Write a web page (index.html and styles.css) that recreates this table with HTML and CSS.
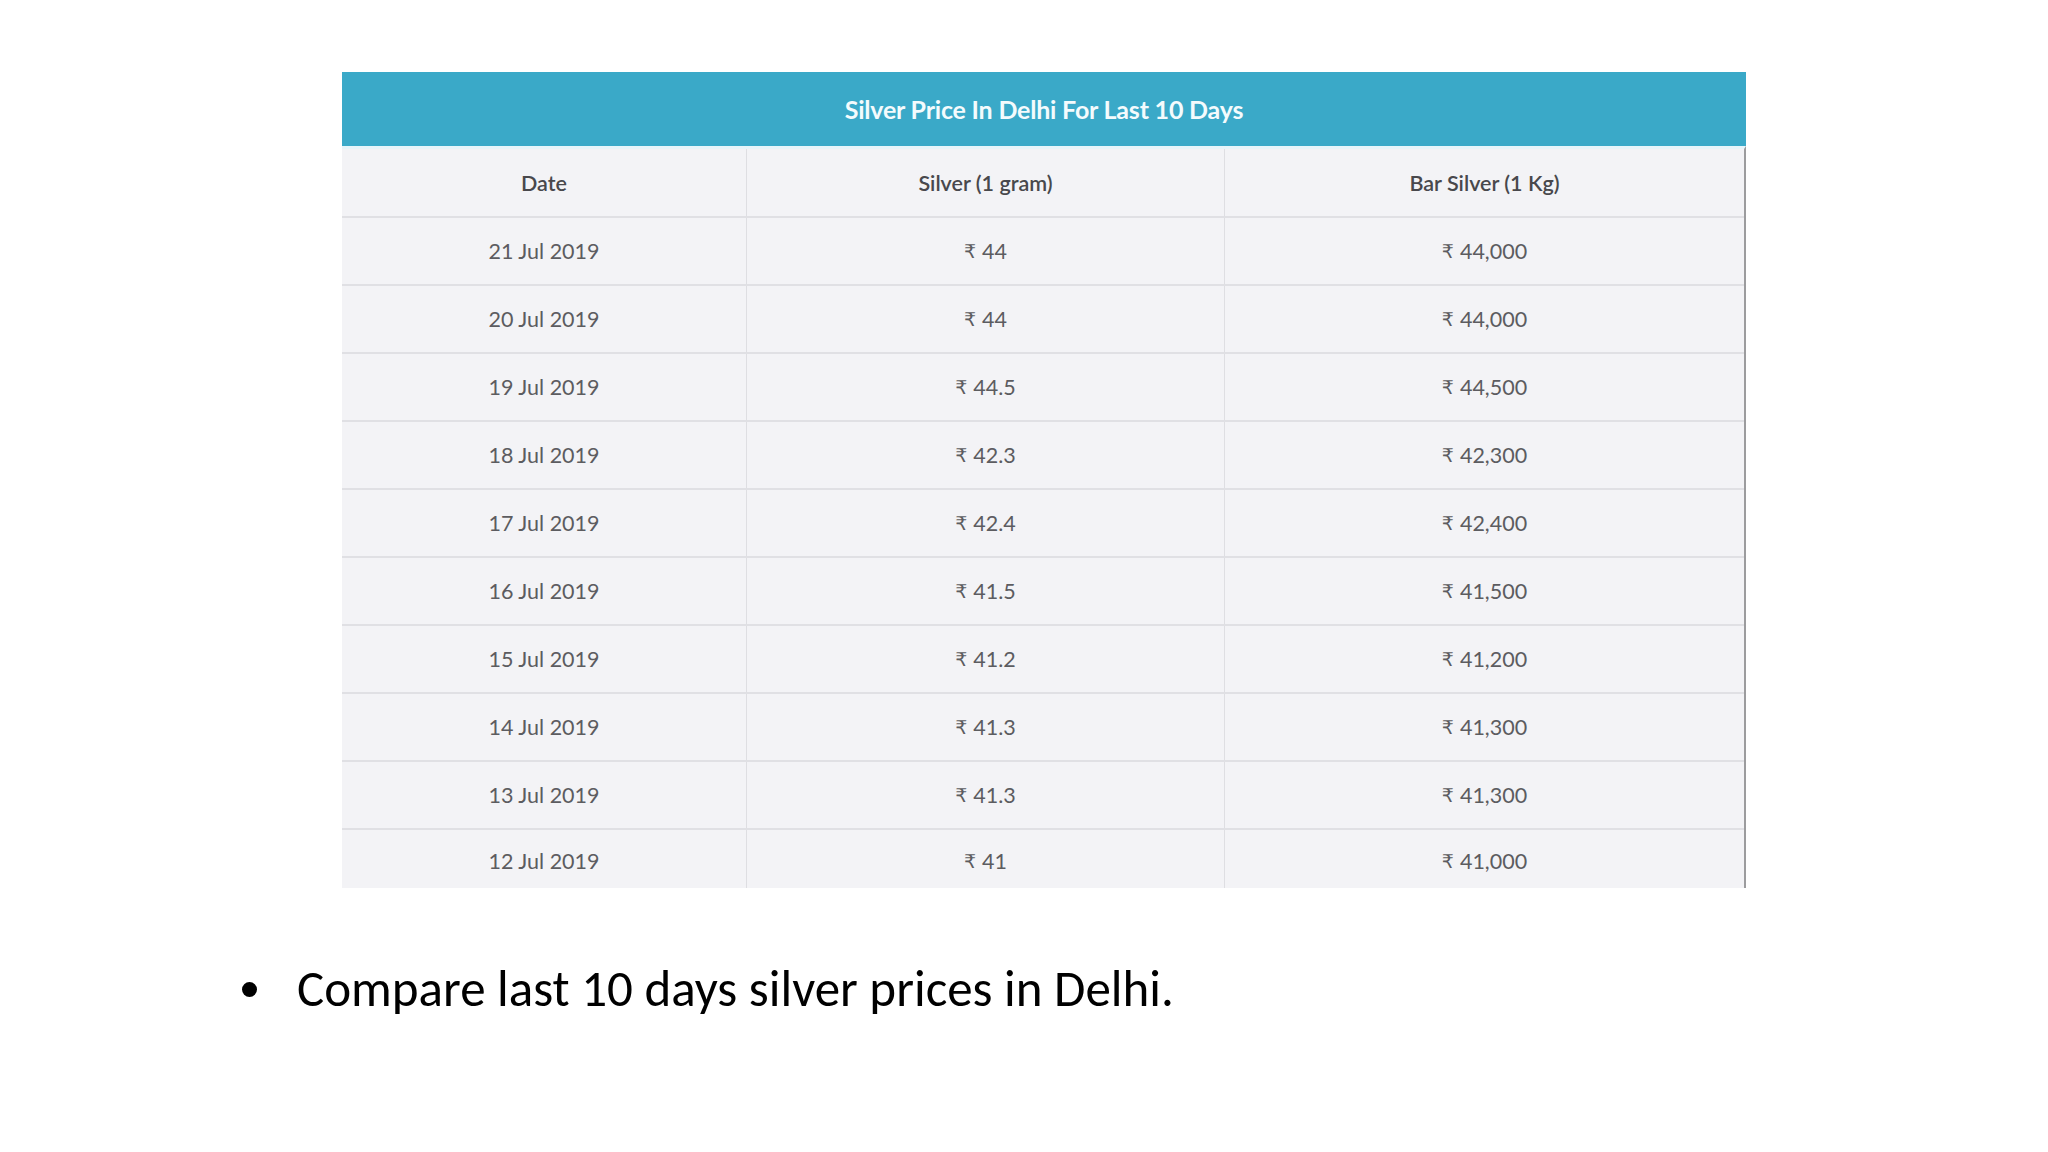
FILE: index.html
```html
<!DOCTYPE html>
<html>
<head>
<meta charset="utf-8">
<link rel="stylesheet" href="styles.css">
</head>
<body>
<div class="slide">
  <div class="table-wrap">
    <div class="title">Silver Price In Delhi For Last 10 Days</div>
    <div class="grid">
      <div class="cell head">Date</div><div class="cell head">Silver (1 gram)</div><div class="cell head">Bar Silver (1 Kg)</div>
      <div class="cell">21 Jul 2019</div><div class="cell"><span class="rs">₹</span>44</div><div class="cell"><span class="rs">₹</span>44,000</div>
      <div class="cell">20 Jul 2019</div><div class="cell"><span class="rs">₹</span>44</div><div class="cell"><span class="rs">₹</span>44,000</div>
      <div class="cell">19 Jul 2019</div><div class="cell"><span class="rs">₹</span>44.5</div><div class="cell"><span class="rs">₹</span>44,500</div>
      <div class="cell">18 Jul 2019</div><div class="cell"><span class="rs">₹</span>42.3</div><div class="cell"><span class="rs">₹</span>42,300</div>
      <div class="cell">17 Jul 2019</div><div class="cell"><span class="rs">₹</span>42.4</div><div class="cell"><span class="rs">₹</span>42,400</div>
      <div class="cell">16 Jul 2019</div><div class="cell"><span class="rs">₹</span>41.5</div><div class="cell"><span class="rs">₹</span>41,500</div>
      <div class="cell">15 Jul 2019</div><div class="cell"><span class="rs">₹</span>41.2</div><div class="cell"><span class="rs">₹</span>41,200</div>
      <div class="cell">14 Jul 2019</div><div class="cell"><span class="rs">₹</span>41.3</div><div class="cell"><span class="rs">₹</span>41,300</div>
      <div class="cell">13 Jul 2019</div><div class="cell"><span class="rs">₹</span>41.3</div><div class="cell"><span class="rs">₹</span>41,300</div>
      <div class="cell last">12 Jul 2019</div><div class="cell last"><span class="rs">₹</span>41</div><div class="cell last"><span class="rs">₹</span>41,000</div>
    </div>
  </div>
  <ul class="bullets">
    <li>Compare last 10 days silver prices in Delhi.</li>
  </ul>
</div>
</body>
</html>
```

FILE: styles.css
```css
html, body {
  margin: 0;
  padding: 0;
  background: #ffffff;
}
.slide {
  width: 2048px;
  height: 1152px;
  padding-top: 72px;
  box-sizing: border-box;
  font-family: Lato, "Liberation Sans", sans-serif;
}
.table-wrap {
  margin-left: 342px;
  width: 1404px;
}
.title {
  height: 74px;
  background: #3aa9c8;
  color: #f4fbfd;
  font-weight: 700;
  font-size: 25px;
  display: flex;
  align-items: center;
  justify-content: center;
  letter-spacing: -0.2px;
}
.grid {
  display: grid;
  grid-template-columns: 405px 478px 519px;
  grid-template-rows: 69px repeat(10, 68px);
  background: #f3f3f6;
  border-right: 2px solid #9c9c9e;
  border-top: 3px solid #e6f5fa;
  height: 742px;
  box-sizing: border-box;
  overflow: hidden;
}
.cell {
  display: flex;
  align-items: center;
  justify-content: center;
  border-bottom: 2px solid #e0e0e4;
  border-right: 1px solid #dedee2;
  font-size: 21.5px;
  color: #5c5c60;
}
.cell:nth-child(3n) {
  border-right: none;
}
.cell.head {
  color: #48484c;
  font-weight: 600;
}
.cell.last {
  border-bottom: none;
  padding-bottom: 6px;
}
.rs {
  font-family: "DejaVu Sans", sans-serif;
  font-size: 19px;
  margin-right: 6px;
}
.bullets {
  margin: 69px 0 0 0;
  padding: 0 0 0 297px;
  list-style: none;
  font-family: Carlito, "Open Sans", sans-serif;
  font-size: 51px;
  color: #000;
}
.bullets li {
  position: relative;
}
.bullets li::before {
  content: "";
  position: absolute;
  left: -55px;
  top: 50%;
  width: 15px;
  height: 15px;
  margin-top: -7px;
  border-radius: 50%;
  background: #000;
}
```
